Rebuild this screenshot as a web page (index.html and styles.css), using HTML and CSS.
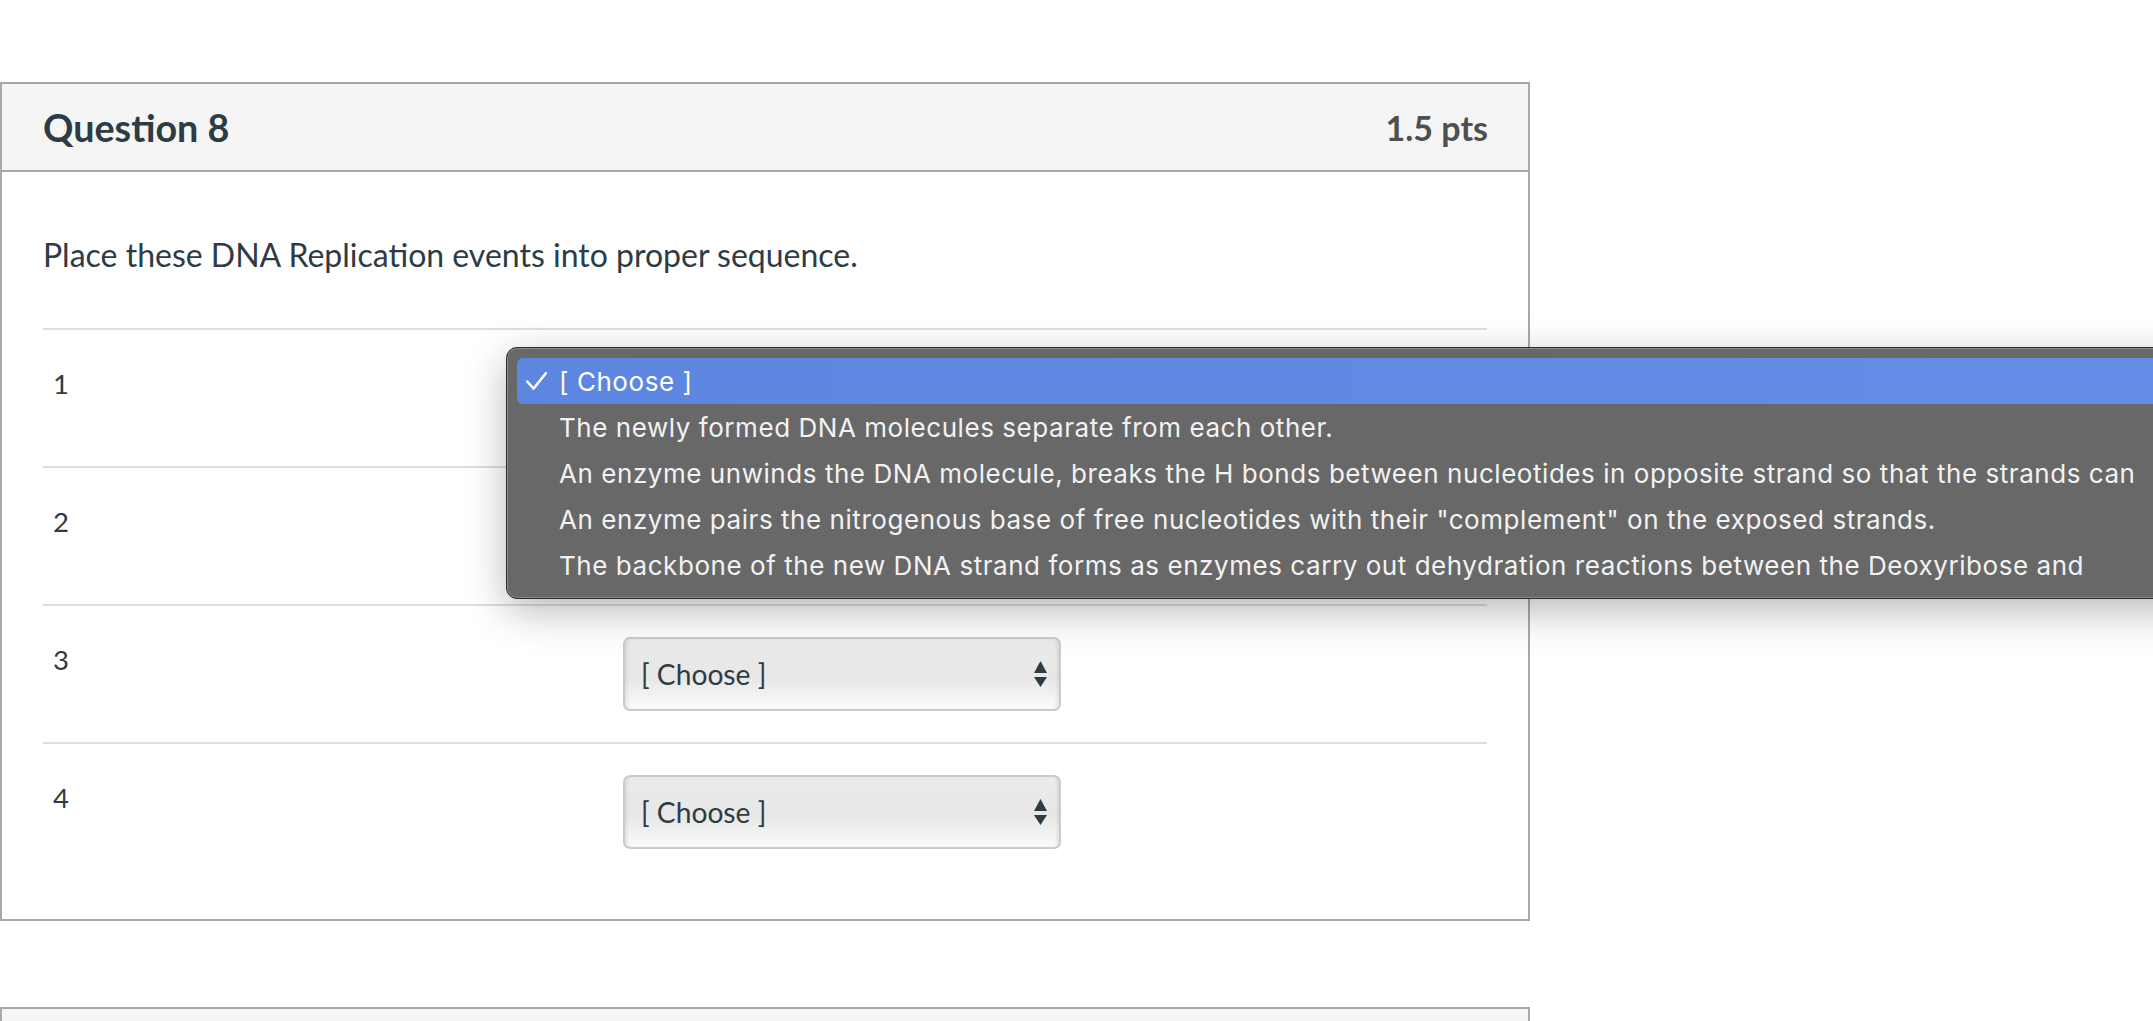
FILE: index.html
```html
<!DOCTYPE html>
<html lang="en">
<head>
<meta charset="UTF-8" />
<title>Question 8</title>
<link rel="stylesheet" href="styles.css">
</head>
<body>
<div class="quiz">
  <div class="question">
    <div class="question-header">
      <h2 class="question-title">Question 8</h2>
      <span class="question-points">1.5 pts</span>
    </div>
    <div class="question-body">
      <p class="question-text">Place these DNA Replication events into proper sequence.</p>
      <div class="answers">
        <div class="answer-row">
          <div class="answer-label">1</div>
          <div class="select-box">
            <span>[ Choose ]</span>
            <svg class="select-arrows" width="13" height="26" viewBox="0 0 13 26"><path d="M0 12 L6.5 0 L13 12 Z M0 16 L13 16 L6.5 26 Z" fill="#2d3b45"/></svg>
          </div>
        </div>
        <div class="answer-row">
          <div class="answer-label">2</div>
          <div class="select-box">
            <span>[ Choose ]</span>
            <svg class="select-arrows" width="13" height="26" viewBox="0 0 13 26"><path d="M0 12 L6.5 0 L13 12 Z M0 16 L13 16 L6.5 26 Z" fill="#2d3b45"/></svg>
          </div>
        </div>
        <div class="answer-row">
          <div class="answer-label">3</div>
          <div class="select-box">
            <span>[ Choose ]</span>
            <svg class="select-arrows" width="13" height="26" viewBox="0 0 13 26"><path d="M0 12 L6.5 0 L13 12 Z M0 16 L13 16 L6.5 26 Z" fill="#2d3b45"/></svg>
          </div>
        </div>
        <div class="answer-row">
          <div class="answer-label">4</div>
          <div class="select-box">
            <span>[ Choose ]</span>
            <svg class="select-arrows" width="13" height="26" viewBox="0 0 13 26"><path d="M0 12 L6.5 0 L13 12 Z M0 16 L13 16 L6.5 26 Z" fill="#2d3b45"/></svg>
          </div>
        </div>
      </div>
    </div>
  </div>
  <div class="question question-next">
    <div class="question-header"></div>
  </div>
</div>

<ul class="select-menu" role="listbox">
  <li class="menu-item selected">
    <span class="check-slot"><svg width="21" height="18" viewBox="0 0 21 18"><path d="M1.2 9.5 L7.6 16.6 L19.8 1.2" fill="none" stroke="#fff" stroke-width="2.5" stroke-linecap="round" stroke-linejoin="round"/></svg></span>
    [ Choose ]
  </li>
  <li class="menu-item"><span class="check-slot"></span>The newly formed DNA molecules separate from each other.</li>
  <li class="menu-item"><span class="check-slot"></span>An enzyme unwinds the DNA molecule, breaks the H bonds between nucleotides in opposite strand so that the strands can</li>
  <li class="menu-item"><span class="check-slot"></span>An enzyme pairs the nitrogenous base of free nucleotides with their "complement" on the exposed strands.</li>
  <li class="menu-item"><span class="check-slot"></span>The backbone of the new DNA strand forms as enzymes carry out dehydration reactions between the Deoxyribose and</li>
</ul>
</body>
</html>
```

FILE: styles.css
```css
/* Base */
html, body {
  margin: 0;
  padding: 0;
  overflow: hidden;
  background: #fff;
}
body {
  font-family: Lato, "Open Sans", sans-serif;
  color: #2d3b45;
}

/* Question cards */
.quiz {
  width: 1530px;
  padding-top: 82px;
}
.question {
  border: 2px solid #a9a9a9;
  background: #fff;
}
.question-next {
  margin-top: 86px;
}
.question-header {
  height: 86px;
  background: #f5f5f5;
  border-bottom: 2px solid #a9a9a9;
  display: flex;
  align-items: center;
  justify-content: space-between;
  padding: 0 40px 0 41px;
}
.question-title {
  margin: 0;
  font-size: 37.7px;
  font-weight: 700;
  color: #2d3b45;
}
.question-points {
  font-size: 34px;
  font-weight: 700;
  color: #4f4f4f;
}
.question-body {
  padding: 61px 41px 39px;
}
.question-text {
  margin: 0 0 52px;
  font-size: 32px;
  line-height: 43px;
}

/* Answer rows */
.answer-row {
  display: flex;
  align-items: flex-start;
  border-top: 2px solid #dedede;
  padding: 31px 0;
}
.answer-label {
  box-sizing: border-box;
  width: 580px;
  padding-left: 10px;
  margin-top: 4px;
  font-size: 27.5px;
  line-height: 1.4;
}
.select-box {
  box-sizing: border-box;
  width: 438px;
  height: 74px;
  display: flex;
  align-items: center;
  justify-content: space-between;
  padding: 0 12px 0 16px;
  border: 2px solid #cbcbcb;
  border-radius: 7px;
  background: linear-gradient(#ebebeb, #e7e7e7 55%, #fafafa);
  box-shadow: inset 4px 0 4px -3px rgba(0,0,0,0.12), inset -4px 0 4px -3px rgba(0,0,0,0.12);
  font-size: 28.2px;
  color: #2d3b45;
}
.select-arrows {
  display: block;
}

/* Open native-style dropdown */
.select-menu {
  position: absolute;
  left: 506px;
  top: 347px;
  width: 1700px;
  margin: 0;
  padding: 10px;
  list-style: none;
  background: #686868;
  border: 1px solid #2e2e2e;
  border-radius: 11px;
  box-shadow: inset 0 0 0 1px #8a8a8a, 0 12px 40px rgba(0,0,0,0.28);
  font-family: Inter, "Liberation Sans", sans-serif;
  font-size: 26px;
  letter-spacing: 0.55px;
  color: #f2f2f2;
  white-space: nowrap;
}
.menu-item {
  height: 46px;
  display: flex;
  align-items: center;
  padding-left: 9px;
  border-radius: 6px;
}
.menu-item.selected {
  background: linear-gradient(to right, #5c86e0, #648de6);
  color: #fff;
}
.check-slot {
  width: 33px;
  flex: none;
  display: flex;
  align-items: center;
}
.check-slot svg {
  display: block;
}
```
